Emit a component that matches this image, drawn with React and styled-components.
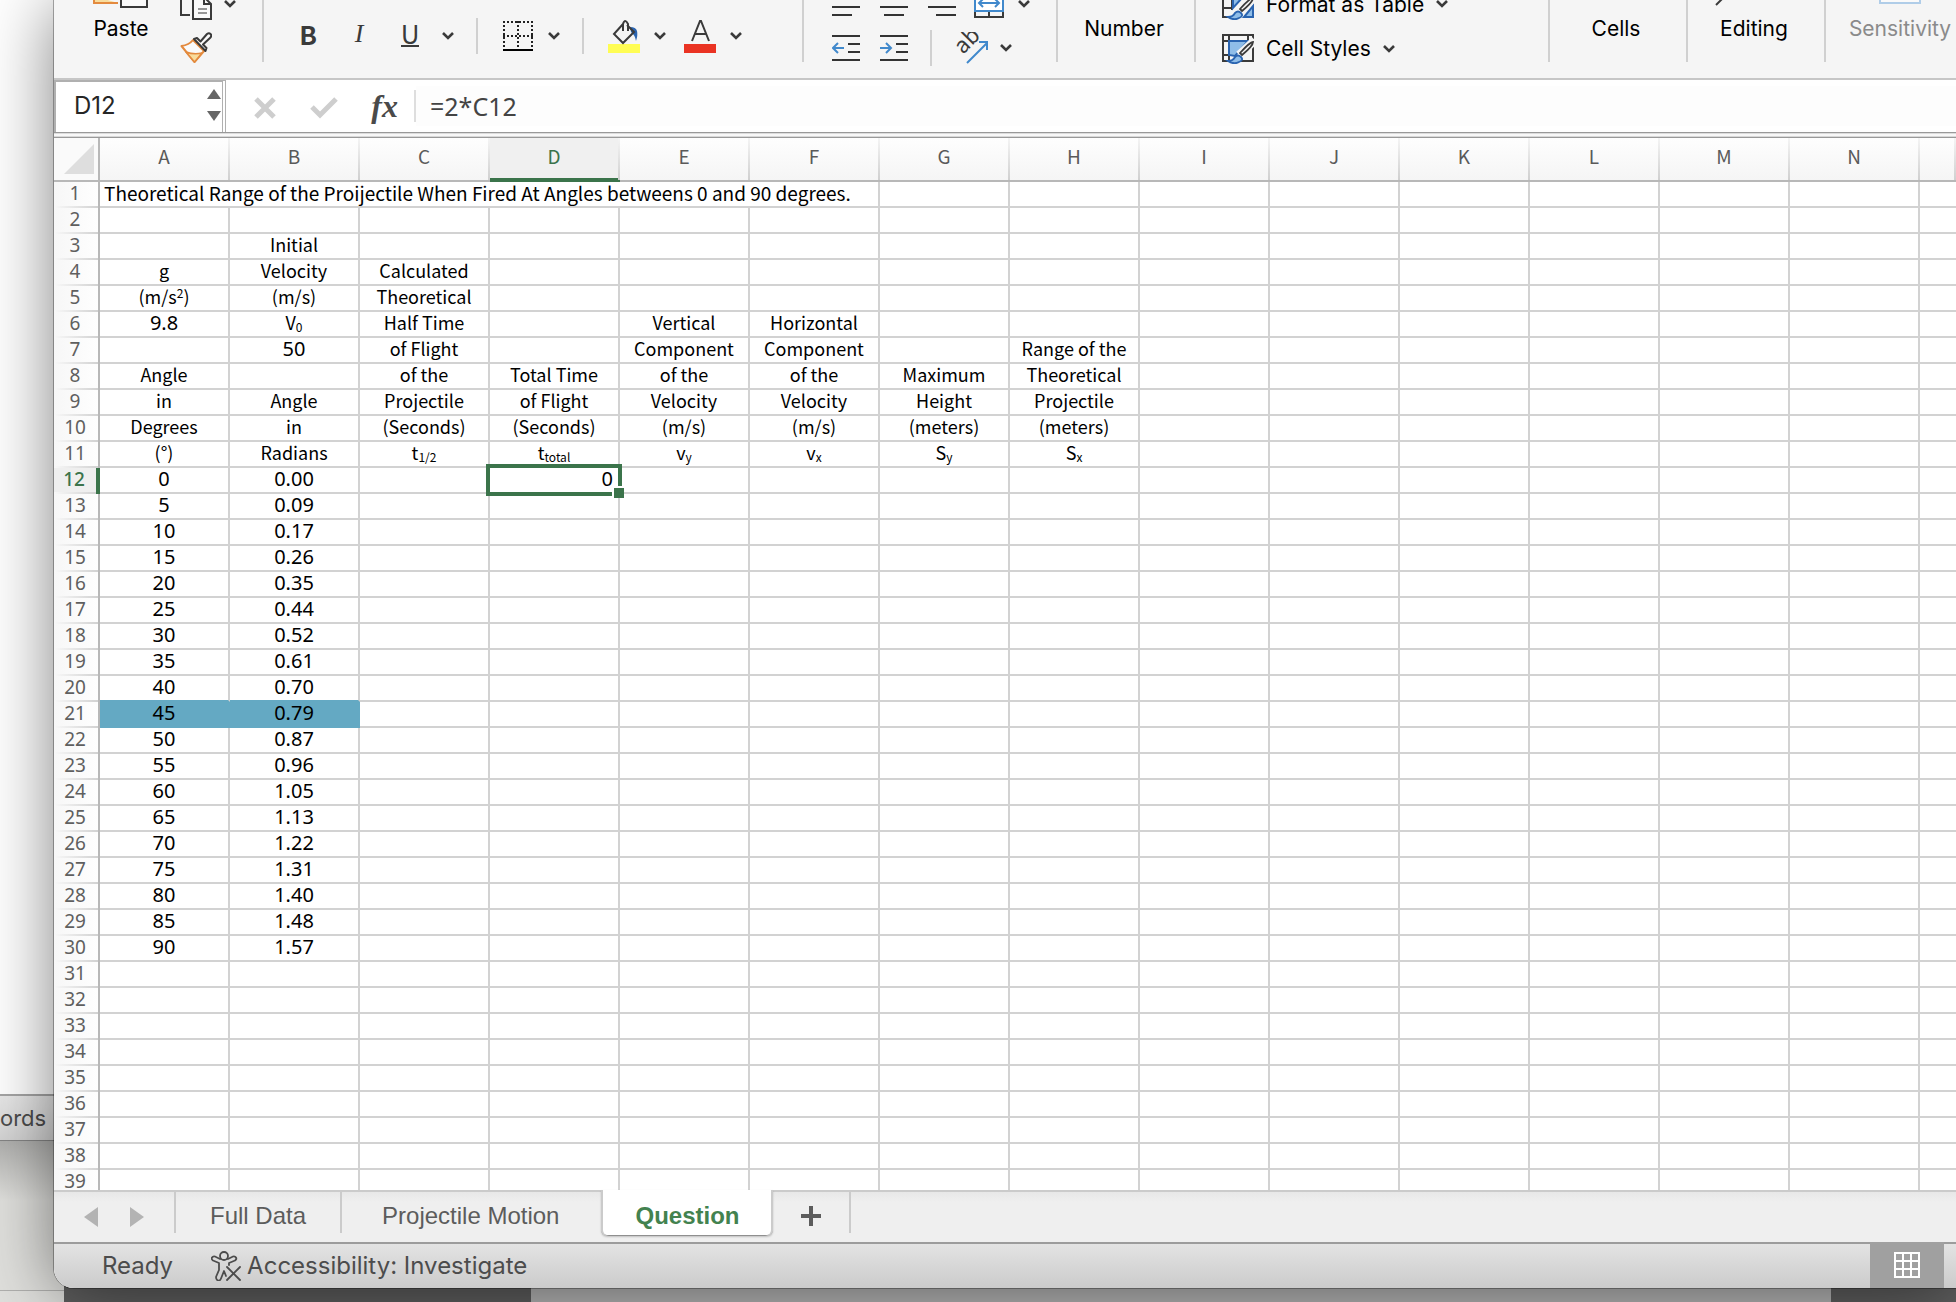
import React from 'react'
import styled, { createGlobalStyle, css } from 'styled-components'

const GlobalStyle = createGlobalStyle`
  * {
    box-sizing: border-box;
  }
  html, body {
    margin: 0;
    height: 100%;
    overflow: hidden;
  }
  button, input {
    font: inherit;
    color: inherit;
    border: 0;
    padding: 0;
    margin: 0;
    background: none;
    outline: none;
  }
  svg {
    display: block;
    flex: none;
  }
`

const ui = `"Inter", "Liberation Sans", sans-serif`
const sheet = `"Noto Sans CJK JP", "Noto Sans", sans-serif`
const digits = `"Noto Sans", "Open Sans", sans-serif`
const green = '#3b744b'
const grid = '#d2d2d2'

/* ---------- desktop ---------- */

const Desktop = styled.div`
  position: relative;
  height: 100vh;
  overflow: hidden;
  background: #5f5f5f;
  font-family: ${ui};
`

const BackWindow = styled.div`
  position: absolute;
  left: 0;
  top: 0;
  bottom: 161px;
  width: 80px;
  display: flex;
  flex-direction: column;
  background: #fff;
  border-bottom: 1px solid #858585;
`

const BackPage = styled.div`
  flex: 1;
`

const BackStatus = styled.div`
  height: 46px;
  border-top: 2px solid #a5a5a5;
  background: linear-gradient(#e8e8e8, #d4d4d4);
  color: #4c4c4c;
  font-size: 22px;
  line-height: 44px;
`

const BackPanel = styled.div`
  position: absolute;
  left: 0;
  bottom: 0;
  width: 64px;
  height: 161px;
  padding-top: 149px;
  background: linear-gradient(#b0b0ae, #e0e0dd 60px);
`

const BackRule = styled.div`
  height: 1px;
  background: #b0b0ae;
`

const BackStrip = styled.div`
  position: absolute;
  left: 531px;
  right: 125px;
  bottom: 0;
  height: 60px;
  background: #b8b8b8;
`

const Window = styled.main`
  position: relative;
  height: calc(100vh - 14px);
  display: flex;
  flex-direction: column;
  overflow: hidden;
  border-bottom-left-radius: 20px;
  background: #fff;
`

const WindowShadow = styled.div`
  position: relative;
  margin-left: 54px;
  border-bottom-left-radius: 20px;
  box-shadow: 0 0 0 1px rgba(0, 0, 0, 0.3), 0 6px 70px rgba(0, 0, 0, 0.5);
`

/* ---------- ribbon ---------- */

const Ribbon = styled.header`
  display: flex;
  flex: none;
  height: 80px;
  overflow: hidden;
  background: #f5f5f5;
  border-bottom: 2px solid #c6c6c6;
  color: #000;
  font-size: 21px;
`

const Group = styled.section`
  flex: none;
  display: flex;
  flex-direction: ${p => (p.$stack ? 'column' : 'row')};
  width: ${p => p.$width};
  height: 62px;
  padding-left: ${p => p.$pad || '0'};
  border-right: 2px solid #d0d0d0;

  &:last-child {
    flex: 1;
    border-right: 0;
  }
`

const BigButton = styled.button`
  display: flex;
  flex-direction: column;
  align-items: center;
  width: ${p => p.$width || '100%'};
  height: 62px;
  padding-right: 4px;
  color: ${p => (p.disabled ? '#8a8a8a' : '#000')};

  svg {
    height: 17px;
  }

  span {
    line-height: 24px;
  }
`

const ClipColumn = styled.div`
  display: flex;
  flex-direction: column;
  gap: 12px;
  margin-left: 20px;
`

const Tools = styled.div`
  display: flex;
  flex: none;
  align-items: ${p => (p.$top ? 'flex-start' : 'center')};
  height: ${p => (p.$top ? '20px' : '36px')};
  margin-top: ${p => p.$offset || '0'};
`

const Tool = styled.button`
  flex: none;
  display: flex;
  align-items: center;
  justify-content: center;
  width: ${p => p.$width || '32px'};
  margin-left: ${p => p.$gap || '0'};
`

const Letter = styled(Tool)`
  height: 36px;
  padding-bottom: 4px;
  font-size: 26px;
  color: #3a3a3a;
  font-family: ${p => p.$font || sheet};
  font-weight: ${p => p.$weight || 400};
  font-style: ${p => p.$style || 'normal'};

  span {
    border-bottom: ${p => (p.$underline ? '2px solid #3a3a3a' : '0')};
    line-height: 24px;
  }
`

const Divider = styled.div`
  width: 2px;
  height: 36px;
  margin: 0 24px 0 22px;
  background: #d0d0d0;
`

const StyleButton = styled.button`
  display: flex;
  flex: none;
  align-items: ${p => (p.$top ? 'flex-start' : 'center')};
  gap: 12px;
  height: ${p => (p.$top ? '20px' : '36px')};
  margin-top: ${p => p.$offset || '0'};

  span {
    line-height: ${p => (p.$top ? '10px' : '36px')};
  }
`

/* ---------- formula bar ---------- */

const FormulaBar = styled.div`
  display: flex;
  flex: none;
  align-items: center;
  height: 52px;
  background: #fff;
`

const NameBox = styled.label`
  display: flex;
  align-items: center;
  justify-content: space-between;
  width: 172px;
  height: 52px;
  padding: 0 1px 4px 18px;
  border: 2px solid #b0b0b0;
  border-right: 4px double #b0b0b0;
  border-bottom: 0;

  input {
    width: 110px;
    font-size: 24px;
    color: #262626;
  }
`

const Stepper = styled.span`
  display: flex;
  flex-direction: column;
  gap: 12px;

  button {
    width: 14px;
    height: 10px;
  }
`

const FormulaActions = styled.div`
  display: flex;
  align-items: center;
  justify-content: space-between;
  width: 190px;
  height: 32px;
  padding: 4px 16px 0 28px;
  border-right: 2px solid #dedede;
`

const Fx = styled.button`
  && {
    padding-bottom: 4px;
    font-family: "Liberation Serif", serif;
    font-style: italic;
    font-weight: 700;
    font-size: 32px;
    line-height: 28px;
    color: #4a4a4a;
  }
`

const FormulaInput = styled.input`
  && {
    flex: 1;
    height: 40px;
    padding-left: 14px;
    font-family: ${digits};
    font-size: 25px;
    color: #444;
    background: #fdfdfd;
  }
`

const Splitter = styled.div`
  flex: none;
  height: 6px;
  background: linear-gradient(#999 1px, #dcdcdc 1px 2px, #f8f8f8 2px 4px, #d8d8d8 4px 5px, #999 5px);
`

/* ---------- grid ---------- */

const SheetArea = styled.div`
  flex: 1;
  min-height: 0;
  overflow: hidden;
`

const Table = styled.table`
  width: 100%;
  table-layout: fixed;
  border-collapse: separate;
  border-spacing: 0;
  font-family: ${sheet};
  font-size: 18px;
`

const Corner = styled.th`
  height: 44px;
  padding: 0;
  background: #fafafa;
  border-right: 2px solid #b8b8b8;
  border-bottom: 2px solid #b8b8b8;

  svg {
    margin: 0 0 0 10px;
  }
`

const ColHead = styled.th`
  height: 44px;
  padding: 0;
  font-size: 19px;
  font-weight: 400;
  line-height: 36px;
  vertical-align: top;
  color: ${p => (p.$active ? green : '#5a5a5a')};
  border: 0 solid;
  border-width: 0 2px 2px 0;
  border-image: linear-gradient(#f6f6f6, #d0d0d0 95%, ${p => (p.$active ? green : '#b8b8b8')} 95%) 2;
  background: ${p => (p.$active ? '#f0f0f0' : 'linear-gradient(#fefefe, #f5f5f5)')};
  box-shadow: ${p => (p.$active ? `inset 0 -2px ${green}` : 'none')};
`

const RowHead = styled.th`
  height: 26px;
  padding: 0 2px 0 0;
  font-family: ${digits};
  font-size: 19px;
  font-weight: ${p => (p.$active ? 500 : 400)};
  line-height: 23px;
  vertical-align: top;
  color: ${p => (p.$active ? green : '#5f5f5f')};
  border-right: ${p => (p.$active ? `4px solid ${green}` : '2px solid #b8b8b8')};
  background:
    linear-gradient(90deg, #f8f8f8, #d2d2d2) bottom / 100% 2px no-repeat,
    ${p => (p.$active ? '#efefef' : 'linear-gradient(90deg, #f7f7f7, #fefefe)')};
`

const Cell = styled.td`
  height: 26px;
  padding: 0;
  line-height: 21px;
  vertical-align: top;
  text-align: center;
  white-space: nowrap;
  color: #000;
  border-right: 2px solid ${grid};
  border-bottom: 2px solid ${grid};

  &:last-child {
    border-right: 0;
  }

  ${p => p.$number && css`
    font-family: ${digits};
    font-size: 20px;
    line-height: 22px;
  `}
  ${p => p.$left && css`
    text-align: left;
    padding-left: 4px;
    font-size: 19px;
  `}
  ${p => p.$right && css`
    position: relative;
    text-align: right;
    padding-right: 5px;
  `}
  ${p => p.$fill && css`
    background: ${p.$fill};
    border-color: ${p.$fill};
  `}
  ${p => p.$underFill && css`
    border-bottom-color: ${p.$underFill};
  `}

  sub, sup {
    font-size: 12px;
    line-height: 0;
  }

  sub {
    vertical-align: -2px;
  }

  sup {
    vertical-align: 6px;
  }
`

const Selection = styled.span`
  position: absolute;
  z-index: 1;
  inset: -4px;
  border: 4px solid ${green};

  &::after {
    content: '';
    position: absolute;
    right: -6px;
    bottom: -6px;
    width: 10px;
    height: 10px;
    background: ${green};
    box-shadow: -2px -2px #fff, 0 -2px #fff, -2px 0 #fff;
  }
`

/* ---------- tabs and status ---------- */

const TabBar = styled.nav`
  display: flex;
  flex: none;
  height: 52px;
  background: linear-gradient(#e6e6e6, #efefef 12px);
  box-shadow: inset 0 2px #cbcbcb;
  color: #5c5c5c;
  font-family: "Liberation Sans", sans-serif;
  font-size: 24px;
`

const TabArrows = styled.div`
  display: flex;
  align-items: center;
  gap: 32px;
  width: 122px;
  height: 43px;
  padding: 10px 0 0 30px;
  border-right: 2px solid #cbcbcb;
`

const Tab = styled.button`
  && {
    height: ${p => (p.$active ? '46px' : '43px')};
    padding: ${p => (p.$active ? '6px 34px 0' : '9px 34px 0')};
    border-right: ${p => (p.$wide || p.$active ? '0' : '2px solid #cbcbcb')};

    ${p => p.$wide && css`
      padding: 9px 42px 0 40px;
    `}
    ${p => p.$active && css`
      color: #43824f;
      font-weight: 700;
      background: #fff;
      border-radius: 0 0 6px 6px;
      box-shadow: inset 2px 0 #cbcbcb, inset -2px 0 #cbcbcb, inset 0 -1px #8f8f8f, 0 1px 2px rgba(0, 0, 0, 0.2);
    `}
  }
`

const AddTab = styled.button`
  && {
    display: flex;
    align-items: center;
    justify-content: center;
    width: 78px;
    height: 43px;
    padding-top: 8px;
    border-right: 2px solid #cbcbcb;
  }
`

const StatusBar = styled.footer`
  display: flex;
  flex: none;
  align-items: center;
  height: 46px;
  padding: 0 12px 0 48px;
  border-top: 2px solid #9c9c9c;
  background: linear-gradient(#e3e3e3, #cbcbcb);
  color: #4c4c4c;
  font-size: 24px;
  line-height: 40px;
`

const StatusButton = styled.button`
  && {
    display: flex;
    align-items: center;
    gap: 6px;
    margin: 0 auto 0 38px;
  }
`

const ViewButton = styled.button`
  && {
    display: flex;
    align-items: center;
    justify-content: center;
    width: 74px;
    height: 46px;
    margin-top: -2px;
    background: #a0a0a0;
  }
`

/* ---------- icons ---------- */

const Chevron = () => (
  <svg width="12" height="8" viewBox="0 0 12 8" fill="none" stroke="#3a3a3a" strokeWidth="2.6">
    <path d="M1 1l5 5 5-5" />
  </svg>
)

const PasteIcon = () => (
  <svg width="56" height="17" viewBox="0 0 56 17">
    <path d="M1 -4v7h24" fill="#f8dc9c" stroke="#e38a3e" strokeWidth="2" />
    <path d="M28 -4V7h26V-4" fill="#fafafa" stroke="#3a3a3a" strokeWidth="2" />
  </svg>
)

const CopyIcon = () => (
  <svg width="32" height="20" viewBox="0 0 32 20" fill="none" stroke="#3a3a3a" strokeWidth="2">
    <path d="M1 -4V15h9" />
    <path d="M13 -4V19h18V4l-5-5" fill="#fafafa" />
    <path d="M24 -2v6h7" />
    <path d="M18 9h9M18 13h9" stroke="#777" strokeWidth="1.5" />
  </svg>
)

const BrushIcon = () => (
  <svg width="32" height="32" viewBox="0 0 32 32" fill="none" strokeWidth="2" strokeLinejoin="round">
    <path d="M1.500 14Q9 13 13 8l11 11-9.500 11z" fill="#fafafa" stroke="#e38a3e" />
    <path d="M6 20q8 3 16 1l-7.500 9z" fill="#f8dc9c" stroke="#e38a3e" strokeWidth="1.500" />
    <path d="M14 7l3-1 3.500 3.500L27 2q2-1.500 3.500 0t0 3.500L23 12.500l3.500 3.500-1 3z" fill="#fafafa" stroke="#3a3a3a" />
  </svg>
)

const BordersIcon = () => (
  <svg width="32" height="32" viewBox="0 0 32 32" fill="none" stroke="#222" strokeWidth="2">
    <path d="M1 2h30M1 16h30M2 1v28M16 1v28M30 1v28" strokeDasharray="2 2" />
    <path d="M1 30h30" stroke="#000" />
  </svg>
)

const FillIcon = () => (
  <svg width="32" height="34" viewBox="0 0 32 34" fill="none">
    <rect y="25" width="32" height="9" fill="#fffd54" />
    <path d="M22 8q6 0 7 4t-1 10q-1-6-5-9z" fill="#2a64b0" />
    <path d="M15 5L6 15l9 9 11-11-7-7M15 12V5q2-6 5 0v7" stroke="#3a3a3a" strokeWidth="2" />
  </svg>
)

const FontColorIcon = () => (
  <svg width="32" height="34" viewBox="0 0 32 34" fill="none">
    <rect y="25" width="32" height="9" fill="#ea3323" />
    <path d="M8 22L16 2h1l8 20M11 15h11" stroke="#3a3a3a" strokeWidth="2" />
  </svg>
)

const linePaths = {
  left: 'M0 7h28M0 15h20',
  center: 'M0 7h28M4 15h20',
  right: 'M0 7h28M8 15h20',
}

const LinesIcon = ({ kind }) => (
  <svg width="28" height="18" viewBox="0 0 28 18" stroke="#333" strokeWidth="2">
    <path d={linePaths[kind]} />
  </svg>
)

const MergeIcon = () => (
  <svg width="30" height="18" viewBox="0 0 30 18" fill="none" strokeWidth="2">
    <path d="M1 12v5h28v-5M15 12v5" stroke="#3a3a3a" />
    <path d="M1 -2V11h28V-2" fill="#fff" stroke="#4189cc" />
    <path d="M5 3h20M9 -1L5 3l4 4M21 -1l4 4-4 4" stroke="#4189cc" />
  </svg>
)

const IndentIcon = ({ right }) => (
  <svg width="28" height="28" viewBox="0 0 28 28" fill="none" strokeWidth="2">
    <path d="M0 2h28M16 10h12M16 18h12M0 26h28" stroke="#333" />
    <path d={right ? 'M0 14h11M6 9l5 5-5 5' : 'M12 14H1M6 9l-5 5 5 5'} stroke="#4189cc" />
  </svg>
)

const OrientationIcon = () => (
  <svg width="32" height="32" viewBox="0 0 32 32" fill="none" strokeWidth="2">
    <text x="7" y="23" fontSize="22" fill="#3a3a3a" fontFamily="Noto Sans CJK JP, sans-serif" transform="rotate(-45 7 23)">ab</text>
    <path d="M11 31L31 11M23 10h8v8" stroke="#4189cc" />
  </svg>
)

const StyleBrush = () => (
  <>
    <path d="M30 6L17 18l3 4L33 9z" fill="#f5f5f5" stroke="#f5f5f5" strokeWidth="4" />
    <path d="M31 8q-3 0-13 11l2 2Q31 12 31 8z" fill="#f5f5f5" stroke="#3a3a3a" strokeWidth="1.800" />
    <path d="M6 27q5 0 7-4 3-3 6 0t-2 5q-5 3-11-1z" fill="#8fbde8" stroke="#2a64b0" strokeWidth="1.800" />
  </>
)

const CellStylesIcon = () => (
  <svg width="32" height="30" viewBox="0 0 32 30" fill="none">
    <path d="M1 1h30v26H1zM1 7h30M7 1v26M26 1v6M1 21h6" stroke="#3a3a3a" strokeWidth="2" />
    <path d="M7 21V7h19L13 22z" fill="#8fbde8" stroke="#2a64b0" strokeWidth="2" />
    <StyleBrush />
  </svg>
)

const TableStylesIcon = () => (
  <svg width="32" height="20" viewBox="0 0 32 20" fill="none">
    <path d="M1 -2v19h6M1 8h9M10 -2v12" stroke="#3a3a3a" strokeWidth="2" />
    <path d="M11 -2v10l9-10zM22 17h9V6z" fill="#8fbde8" stroke="#2a64b0" strokeWidth="2" />
    <g transform="translate(0 -10)">
      <StyleBrush />
    </g>
  </svg>
)

const AccessibilityIcon = () => (
  <svg width="30" height="30" viewBox="0 0 30 30" fill="none" stroke="#4c4c4c" strokeWidth="1.800" strokeLinecap="round" strokeLinejoin="round">
    <circle cx="13" cy="5" r="4" />
    <path d="M9 8L4 5.500q-2-.5-3 1t1 3L8 12v7L5 26q0 3 2 3.500t3-2L13 20l2 5" />
    <path d="M17 8l5-2.500q2-.5 3 1t-1 3L18 12v2" />
    <path d="M16 16l13 13M29 16L16 29" />
  </svg>
)

const Triangle = ({ d, w, h, fill }) => (
  <svg width={w} height={h} viewBox={`0 0 ${w} ${h}`}>
    <path d={d} fill={fill} />
  </svg>
)

/* ---------- data ---------- */

const columns = ['A', 'B', 'C', 'D', 'E', 'F', 'G', 'H', 'I', 'J', 'K', 'L', 'M', 'N', 'O']
const rowCount = 39
const highlight = '#64a9c3'

const cells = {
  B3: 'Initial',
  A4: 'g', B4: 'Velocity', C4: 'Calculated',
  A5: <>(m/s<sup>2</sup>)</>, B5: '(m/s)', C5: 'Theoretical',
  A6: '9.8', B6: <>V<sub>0</sub></>, C6: 'Half Time', E6: 'Vertical', F6: 'Horizontal',
  B7: '50', C7: 'of Flight', E7: 'Component', F7: 'Component', H7: 'Range of the',
  A8: 'Angle', C8: 'of the', D8: 'Total Time', E8: 'of the', F8: 'of the', G8: 'Maximum', H8: 'Theoretical',
  A9: 'in', B9: 'Angle', C9: 'Projectile', D9: 'of Flight', E9: 'Velocity', F9: 'Velocity', G9: 'Height', H9: 'Projectile',
  A10: 'Degrees', B10: 'in', C10: '(Seconds)', D10: '(Seconds)', E10: '(m/s)', F10: '(m/s)', G10: '(meters)', H10: '(meters)',
  A11: '(°)', B11: 'Radians', C11: <>t<sub>1/2</sub></>, D11: <>t<sub>total</sub></>,
  E11: <>v<sub>y</sub></>, F11: <>v<sub>x</sub></>, G11: <>S<sub>y</sub></>, H11: <>S<sub>x</sub></>,
}

for (let i = 0; i <= 18; i++) {
  const angle = i * 5
  cells[`A${12 + i}`] = String(angle)
  cells[`B${12 + i}`] = ((angle * Math.PI) / 180).toFixed(2)
}

const isNumber = value => typeof value === 'string' && /^[\d.]+$/.test(value)

const Row = ({ n }) => {
  const filled = col => col === 'A' || col === 'B'
  return (
    <tr>
      <RowHead scope="row" $active={n === 12}>{n}</RowHead>
      {n === 1 && (
        <Cell colSpan={6} $left>
          Theoretical Range of the Proijectile When Fired At Angles betweens 0 and 90 degrees.
        </Cell>
      )}
      {columns.slice(n === 1 ? 6 : 0).map(col => {
        const id = col + n
        if (id === 'D12') {
          return (
            <Cell key={id} $number $right>
              0<Selection />
            </Cell>
          )
        }
        return (
          <Cell
            key={id}
            $number={isNumber(cells[id])}
            $fill={n === 21 && filled(col) ? highlight : undefined}
            $underFill={n === 20 && filled(col) ? highlight : undefined}
          >
            {cells[id]}
          </Cell>
        )
      })}
    </tr>
  )
}

/* ---------- sections ---------- */

const RibbonBar = () => (
  <Ribbon>
    <Group $width="210px" $pad="32px">
      <BigButton $width="74px">
        <PasteIcon />
        <span>Paste</span>
      </BigButton>
      <ClipColumn>
        <Tools $top>
          <Tool aria-label="Copy"><CopyIcon /></Tool>
          <Tool $width="12px" $gap="12px" aria-label="Copy options"><Chevron /></Tool>
        </Tools>
        <Tool aria-label="Format painter"><BrushIcon /></Tool>
      </ClipColumn>
    </Group>
    <Group $width="540px" $pad="26px">
      <Tools $offset="18px">
        <Letter $width="36px" $weight="700"><span>B</span></Letter>
        <Letter $width="36px" $gap="15px" $style="italic" $font='"Liberation Serif", serif'><span>I</span></Letter>
        <Letter $width="36px" $gap="15px" $underline><span>U</span></Letter>
        <Tool $width="12px" $gap="14px" aria-label="Underline options"><Chevron /></Tool>
        <Divider />
        <Tool aria-label="Borders"><BordersIcon /></Tool>
        <Tool $width="12px" $gap="14px" aria-label="Border options"><Chevron /></Tool>
        <Divider />
        <Tool aria-label="Fill color"><FillIcon /></Tool>
        <Tool $width="12px" $gap="14px" aria-label="Fill options"><Chevron /></Tool>
        <Tool $gap="18px" aria-label="Font color"><FontColorIcon /></Tool>
        <Tool $width="12px" $gap="14px" aria-label="Font color options"><Chevron /></Tool>
      </Tools>
    </Group>
    <Group $width="254px" $pad="28px" $stack>
      <Tools $top>
        <Tool $width="28px" aria-label="Align left"><LinesIcon kind="left" /></Tool>
        <Tool $width="28px" $gap="20px" aria-label="Align center"><LinesIcon kind="center" /></Tool>
        <Tool $width="28px" $gap="20px" aria-label="Align right"><LinesIcon kind="right" /></Tool>
        <Tool $width="30px" $gap="18px" aria-label="Merge"><MergeIcon /></Tool>
        <Tool $width="12px" $gap="14px" aria-label="Merge options"><Chevron /></Tool>
      </Tools>
      <Tools $offset="10px">
        <Tool $width="28px" aria-label="Decrease indent"><IndentIcon /></Tool>
        <Tool $width="28px" $gap="20px" aria-label="Increase indent"><IndentIcon right /></Tool>
        <Divider />
        <Tool aria-label="Orientation"><OrientationIcon /></Tool>
        <Tool $width="12px" $gap="12px" aria-label="Orientation options"><Chevron /></Tool>
      </Tools>
    </Group>
    <Group $width="138px">
      <BigButton>
        <svg width="20" height="17" />
        <span>Number</span>
      </BigButton>
    </Group>
    <Group $width="354px" $pad="26px" $stack>
      <StyleButton $top>
        <TableStylesIcon />
        <span>Format as Table</span>
        <Chevron />
      </StyleButton>
      <StyleButton $offset="11px">
        <CellStylesIcon />
        <span>Cell Styles</span>
        <Chevron />
      </StyleButton>
    </Group>
    <Group $width="138px">
      <BigButton>
        <svg width="20" height="17" />
        <span>Cells</span>
      </BigButton>
    </Group>
    <Group $width="138px">
      <BigButton>
        <svg width="80" height="17" viewBox="0 0 80 17">
          <path d="M2 5l7-7" stroke="#3a3a3a" strokeWidth="2" />
        </svg>
        <span>Editing</span>
      </BigButton>
    </Group>
    <Group $pad="20px">
      <BigButton disabled $width="112px">
        <svg width="42" height="17" viewBox="0 0 42 17">
          <path d="M1 -4v7h40v-7" fill="#fafafa" stroke="#b0cde8" strokeWidth="2" />
        </svg>
        <span>Sensitivity</span>
      </BigButton>
    </Group>
  </Ribbon>
)

const FormulaRow = () => (
  <FormulaBar>
    <NameBox>
      <input aria-label="Name box" defaultValue="D12" />
      <Stepper>
        <button aria-label="Previous cell"><Triangle w={14} h={10} d="M7 0l7 10H0z" fill="#666" /></button>
        <button aria-label="Next cell"><Triangle w={14} h={10} d="M7 10l7-10H0z" fill="#666" /></button>
      </Stepper>
    </NameBox>
    <FormulaActions>
      <button aria-label="Cancel">
        <svg width="22" height="22" viewBox="0 0 22 22" stroke="#cecece" strokeWidth="5">
          <path d="M2 2l18 18M20 2L2 20" />
        </svg>
      </button>
      <button aria-label="Enter">
        <svg width="28" height="22" viewBox="0 0 28 22" fill="none" stroke="#cecece" strokeWidth="5">
          <path d="M2 10l8 8L26 2" />
        </svg>
      </button>
      <Fx>fx</Fx>
    </FormulaActions>
    <FormulaInput aria-label="Formula" defaultValue="=2*C12" />
  </FormulaBar>
)

const Sheet = () => (
  <SheetArea>
    <Table>
      <colgroup>
        <col style={{ width: 46 }} />
        {columns.map((c, i) => (
          <col key={c} style={i < columns.length - 1 ? { width: 130 } : undefined} />
        ))}
      </colgroup>
      <thead>
        <tr>
          <Corner>
            <svg width="30" height="30" viewBox="0 0 30 30">
              <path d="M30 0v30H0z" fill="#dedede" />
            </svg>
          </Corner>
          {columns.map(c => (
            <ColHead key={c} scope="col" $active={c === 'D'}>{c === 'O' ? '' : c}</ColHead>
          ))}
        </tr>
      </thead>
      <tbody>
        {Array.from({ length: rowCount }, (_, i) => <Row key={i} n={i + 1} />)}
      </tbody>
    </Table>
  </SheetArea>
)

const Tabs = () => (
  <TabBar>
    <TabArrows>
      <button aria-label="Previous sheet"><Triangle w={14} h={20} d="M14 0v20L0 10z" fill="#b3b3b3" /></button>
      <button aria-label="Next sheet"><Triangle w={14} h={20} d="M0 0v20l14-10z" fill="#b3b3b3" /></button>
    </TabArrows>
    <Tab>Full Data</Tab>
    <Tab $wide>Projectile Motion</Tab>
    <Tab $active>Question</Tab>
    <AddTab aria-label="Add sheet">
      <svg width="20" height="20" viewBox="0 0 20 20">
        <path d="M10 0v20M0 10h20" stroke="#5c5c5c" strokeWidth="4" />
      </svg>
    </AddTab>
  </TabBar>
)

const Status = () => (
  <StatusBar>
    <span>Ready</span>
    <StatusButton>
      <AccessibilityIcon />
      Accessibility: Investigate
    </StatusButton>
    <ViewButton aria-label="Normal view">
      <svg width="26" height="26" viewBox="0 0 26 26" fill="none" stroke="#fff" strokeWidth="2">
        <path d="M1 1h24v24H1zM9 1v24M17 1v24M1 9h24M1 17h24" />
      </svg>
    </ViewButton>
  </StatusBar>
)

const App = () => {
  return (
    <Desktop>
      <GlobalStyle />
      <BackPanel>
        <BackRule />
      </BackPanel>
      <BackWindow>
        <BackPage />
        <BackStatus>ords</BackStatus>
      </BackWindow>
      <BackStrip />
      <WindowShadow>
        <Window>
          <RibbonBar />
          <FormulaRow />
          <Splitter />
          <Sheet />
          <Tabs />
          <Status />
        </Window>
      </WindowShadow>
    </Desktop>
  )
}

export default App
